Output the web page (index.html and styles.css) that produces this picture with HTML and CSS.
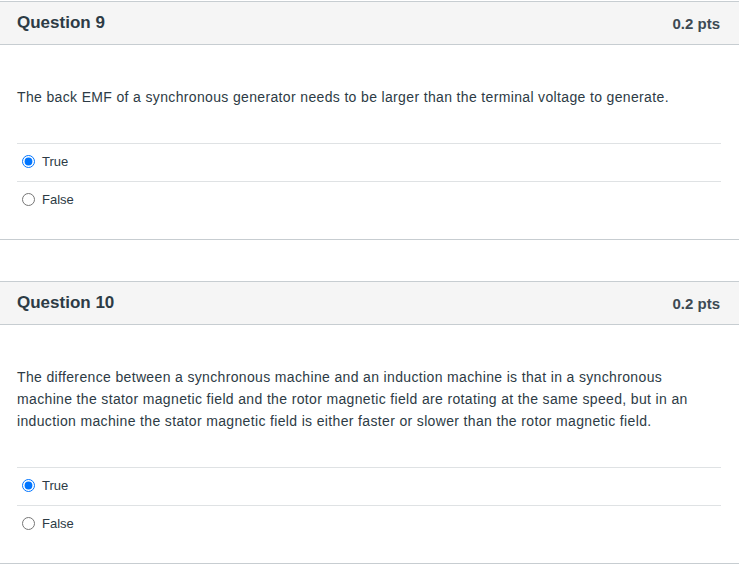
FILE: index.html
```html
<!DOCTYPE html>
<html>
<head>
    <meta charset="UTF-8" />
    <title>Quiz</title>
    <link rel="stylesheet" href="styles.css">
</head>
<body>
<div class="question">
    <div class="question-header">
        <div class="question-title">Question 9</div>
        <div class="question-points">0.2 pts</div>
    </div>
    <div class="question-body">
        <div class="question-text">The back EMF of a synchronous generator needs to be larger than the terminal voltage to generate.</div>
        <div class="answers">
            <label class="answer"><input type="radio" name="q9" checked> True</label>
            <label class="answer"><input type="radio" name="q9"> False</label>
        </div>
    </div>
</div>

<div class="question">
    <div class="question-header">
        <div class="question-title">Question 10</div>
        <div class="question-points">0.2 pts</div>
    </div>
    <div class="question-body">
        <div class="question-text">The difference between a synchronous machine and an induction machine is that in a synchronous machine the stator magnetic field and the rotor magnetic field are rotating at the same speed, but in an induction machine the stator magnetic field is either faster or slower than the rotor magnetic field.</div>
        <div class="answers">
            <label class="answer"><input type="radio" name="q10" checked> True</label>
            <label class="answer"><input type="radio" name="q10"> False</label>
        </div>
    </div>
</div>
</body>
</html>
```

FILE: styles.css
```css
* {
    margin: 0;
    padding: 0;
    box-sizing: border-box;
}

:root {
    --text-color: #2d3b45;
    --border-color: #c7cdd1;
    --header-bg: #f5f5f5;
    --divider: #dfe2e4;
}

body {
    font-family: 'Liberation Sans', Arial, sans-serif;
    color: var(--text-color);
    background: #fff;
    padding-top: 1px;
}

.question {
    border-top: 1px solid var(--border-color);
    border-bottom: 1px solid var(--border-color);
    margin-bottom: 41px;
}

.question-header {
    display: flex;
    justify-content: space-between;
    align-items: center;
    height: 43px;
    padding: 0 19px 0 17px;
    background-color: var(--header-bg);
    border-bottom: 1px solid var(--border-color);
    font-weight: bold;
}

.question-title {
    font-size: 17px;
}

.question-points {
    font-size: 15px;
    color: #3d4a53;
}

.question-body {
    padding: 41px 18px 20px 17px;
}

.question-text {
    font-size: 14px;
    line-height: 22px;
    letter-spacing: 0.35px;
    margin-bottom: 35px;
    padding-right: 12px;
}

.answers {
    display: flex;
    flex-direction: column;
}

.answer {
    display: flex;
    align-items: center;
    height: 38px;
    padding-bottom: 3px;
    border-top: 1px solid var(--divider);
    font-size: 13px;
    padding-left: 5px;
    gap: 7px;
}

.answer input {
    width: 13px;
    height: 13px;
    margin: 0;
}
```
